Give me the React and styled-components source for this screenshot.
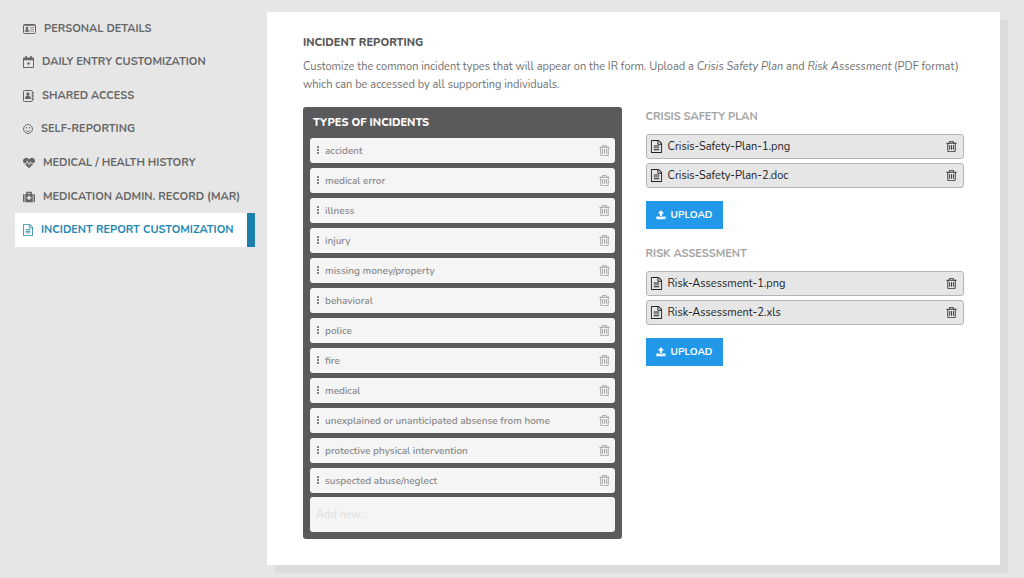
import React from "react";
import styled, { createGlobalStyle } from "styled-components";
import { FaHeartbeat, FaMedkit } from "react-icons/fa";

const GlobalStyle = createGlobalStyle`
  *, *::before, *::after { box-sizing: border-box; }
  body {
    margin: 0;
    background: #e6e6e6;
    color: #666;
    font: 400 11px/18px Nunito, "Open Sans", sans-serif;
  }
  h1, h2, p, ul { margin: 0; padding: 0; }
  ul { list-style: none; }
  button, input { font: inherit; color: inherit; }
  svg { display: block; flex: none; }
`;

const Page = styled.div`
  display: flex;
  align-items: flex-start;
  gap: 12px;
  padding: 12px 24px 14px 15px;
`;

const Nav = styled.nav`
  flex: none;
  display: grid;
  grid-auto-rows: 1fr;
  width: 240px;
  min-height: 235px;
`;

const NavLink = styled.a`
  display: flex;
  align-items: center;
  gap: 8px;
  padding-left: 8px;
  color: ${(p) => (p.$active ? "#2387b3" : "#666")};
  background: ${(p) => (p.$active ? "#fff" : "transparent")};
  border-right: 8px solid ${(p) => (p.$active ? "#1a7fab" : "transparent")};
  font-weight: 700;
  text-decoration: none;
  white-space: nowrap;
`;

const Panel = styled.main`
  flex: 1;
  min-width: 0;
  padding: 22px 36px 26px;
  background: #fff;
  box-shadow: 8px 8px 0 #dcdcdc;
`;

const Title = styled.h1`
  font-size: 11px;
  line-height: 18px;
  font-weight: 800;
  color: #58585a;
`;

const Intro = styled.p`
  margin-top: 6px;
  color: #707070;
`;

const Columns = styled.div`
  display: grid;
  grid-template-columns: 1fr 1fr;
  align-items: start;
  gap: 24px;
  margin-top: 13px;
`;

const Incidents = styled.section`
  padding: 7px;
  background: #5a5a5c;
  border-radius: 3px;
`;

const IncidentsTitle = styled.h2`
  padding: 0 3px;
  margin-bottom: 6px;
  color: #fff;
  font-size: 11px;
  line-height: 18px;
  font-weight: 800;
`;

const IncidentList = styled.ul`
  display: grid;
  gap: 5px;
`;

const Incident = styled.li`
  display: flex;
  align-items: center;
  gap: 5px;
  height: 25px;
  padding: 0 4px 0 6px;
  background: #f5f5f5;
  border-radius: 3px;
  color: #8a8a8a;
  font-size: 10px;
  font-weight: 600;
`;

const Label = styled.span`
  flex: 1;
  min-width: 0;
`;

const IconButton = styled.button`
  display: flex;
  padding: 0;
  border: 0;
  background: none;
  color: ${(p) => (p.$dark ? "#333338" : "#a0a0a0")};
  cursor: pointer;
`;

const NewIncident = styled.input`
  display: block;
  width: 100%;
  height: 35px;
  margin-top: 4px;
  padding: 0 6px;
  border: 0;
  border-radius: 3px;
  background: #f5f5f5;
  &::placeholder { color: #dedede; opacity: 1; }
`;

const Documents = styled.div`
  display: grid;
  gap: 15px;
`;

const DocTitle = styled.h2`
  color: #a3a3a3;
  font-size: 11px;
  line-height: 20px;
  font-weight: 700;
`;

const FileList = styled.ul`
  display: grid;
  gap: 4px;
  margin: 7px 0 13px;
`;

const FileRow = styled.li`
  display: flex;
  align-items: center;
  gap: 5px;
  height: 25px;
  padding: 0 5px 0 3px;
  border: 1px solid #b4b4b4;
  border-radius: 3px;
  background: #e6e6e6;
  color: #222;
`;

const Upload = styled.button`
  display: flex;
  align-items: center;
  justify-content: center;
  gap: 5px;
  width: 77px;
  height: 28px;
  padding: 0;
  border: 0;
  background: #2199e8;
  color: #fff;
  font-size: 10px;
  font-weight: 700;
  cursor: pointer;
`;

const FaGlyph = ({ d, size }) => (
  <svg width={size} height={size} viewBox="0 0 1792 1792" fill="currentColor" aria-hidden="true">
    <path d={d} />
  </svg>
);

const TRASH =
  "M704 736v576q0 14-9 23t-23 9h-64q-14 0-23-9t-9-23v-576q0-14 9-23t23-9h64q14 0 23 9t9 23zm256 0v576q0 14-9 23t-23 9h-64q-14 0-23-9t-9-23v-576q0-14 9-23t23-9h64q14 0 23 9t9 23zm256 0v576q0 14-9 23t-23 9h-64q-14 0-23-9t-9-23v-576q0-14 9-23t23-9h64q14 0 23 9t9 23zm128 724v-948h-896v948q0 22 7 40.5t14.5 27 10.5 8.5h832q3 0 10.5-8.5t14.5-27 7-40.5zm-672-1076h448l-48-117q-7-9-17-11h-317q-10 2-17 11zm928 32v64q0 14-9 23t-23 9h-96v948q0 83-47 143.5t-113 60.5h-832q-66 0-113-58.5t-47-141.5v-952h-96q-14 0-23-9t-9-23v-64q0-14 9-23t23-9h309l70-167q15-37 54-63t79-26h320q40 0 79 26t54 63l70 167h309q14 0 23 9t9 23z";
const UPLOAD =
  "M1344 1472q0-26-19-45t-45-19-45 19-19 45 19 45 45 19 45-19 19-45zm256 0q0-26-19-45t-45-19-45 19-19 45 19 45 45 19 45-19 19-45zm128-224v320q0 40-28 68t-68 28h-1472q-40 0-68-28t-28-68v-320q0-40 28-68t68-28h427q21 56 70.5 92t110.5 36h256q61 0 110.5-36t70.5-92h427q40 0 68 28t28 68zm-325-648q-17 40-59 40h-256v448q0 26-19 45t-45 19h-256q-26 0-45-19t-19-45v-448h-256q-42 0-59-40-17-39 14-69l448-448q18-19 45-19t45 19l448 448q31 30 14 69z";
const FILE =
  "M1596 380q28 28 48 76t20 88v1152q0 40-28 68t-68 28h-1344q-40 0-68-28t-28-68v-1600q0-40 28-68t68-28h896q40 0 88 20t76 48zm-444-244v376h376q-10-29-22-41l-313-313q-12-12-41-22zm384 1528v-1024h-416q-40 0-68-28t-28-68v-416h-768v1536h1280zm-1024-864q0-14 9-23t23-9h704q14 0 23 9t9 23v64q0 14-9 23t-23 9h-704q-14 0-23-9t-9-23v-64zm736 224q14 0 23 9t9 23v64q0 14-9 23t-23 9h-704q-14 0-23-9t-9-23v-64q0-14 9-23t23-9h704zm0 256q14 0 23 9t9 23v64q0 14-9 23t-23 9h-704q-14 0-23-9t-9-23v-64q0-14 9-23t23-9h704z";

const IdCardIcon = () => (
  <svg width="13" height="10" viewBox="0 0 13 10" aria-hidden="true">
    <rect x=".5" y=".5" width="12" height="9" rx="1" fill="none" stroke="currentColor" />
    <path d="M.5 1.3h12" stroke="currentColor" />
    <circle cx="4" cy="4" r="1.3" fill="currentColor" />
    <path d="M2 7.6q0-2.2 2-2.2t2 2.2zM7.2 3.6H11M7.2 5.4H11M7.2 7.2H11" fill="currentColor" stroke="currentColor" strokeWidth=".6" />
  </svg>
);

const CalendarIcon = () => (
  <svg width="11" height="12" viewBox="0 0 11 12" aria-hidden="true">
    <path d="M1 1.5h1.2V.6q0-.6.6-.6h.6q.6 0 .6.6v.9h3V.6q0-.6.6-.6h.6q.6 0 .6.6v.9H10q1 0 1 1V11q0 1-1 1H1q-1 0-1-1V2.500q0-1 1-1zM1 4.300V11h9V4.300z" fill="currentColor" fillRule="evenodd" />
    <path d="M5.500 6v3.200M3.900 7.600h3.200" stroke="currentColor" strokeWidth=".9" />
  </svg>
);

const AddressBookIcon = () => (
  <svg width="11" height="12" viewBox="0 0 11 12" aria-hidden="true">
    <rect x=".5" y=".5" width="8.800" height="11" rx=".8" fill="none" stroke="currentColor" />
    <circle cx="4.900" cy="4" r="1.700" fill="currentColor" />
    <path d="M2 8.900q-.2-3.500 2.900-3.500t2.900 3.500z" fill="currentColor" />
    <path d="M10.300 2v1.800M10.300 5.100v1.800M10.300 8.200V10" stroke="currentColor" />
  </svg>
);

const SmileIcon = () => (
  <svg width="10" height="10" viewBox="0 0 10 10" aria-hidden="true">
    <circle cx="5" cy="5" r="4.500" fill="none" stroke="currentColor" strokeWidth=".9" />
    <circle cx="3.400" cy="3.700" r=".75" fill="currentColor" />
    <circle cx="6.600" cy="3.700" r=".75" fill="currentColor" />
    <path d="M2.700 6q.6 1.700 2.300 1.700T7.300 6" fill="none" stroke="currentColor" strokeWidth=".8" />
  </svg>
);

const NavFileIcon = () => (
  <svg width="10" height="12" viewBox="128 0 1536 1792" fill="currentColor" aria-hidden="true">
    <path d={FILE} />
  </svg>
);

const GripIcon = () => (
  <svg width="4" height="9" viewBox="0 0 4 9" fill="#808080" aria-hidden="true">
    <rect x="1" y="0" width="2" height="2" />
    <rect x="1" y="3" width="2" height="2" />
    <rect x="1" y="6" width="2" height="2" />
  </svg>
);

const sections = [
  { label: "PERSONAL DETAILS", icon: <IdCardIcon /> },
  { label: "DAILY ENTRY CUSTOMIZATION", icon: <CalendarIcon /> },
  { label: "SHARED ACCESS", icon: <AddressBookIcon /> },
  { label: "SELF-REPORTING", icon: <SmileIcon /> },
  { label: "MEDICAL / HEALTH HISTORY", icon: <FaHeartbeat size={12} /> },
  { label: "MEDICATION ADMIN. RECORD (MAR)", icon: <FaMedkit size={12} /> },
  { label: "INCIDENT REPORT CUSTOMIZATION", icon: <NavFileIcon />, active: true },
];

const incidents = [
  "accident",
  "medical error",
  "illness",
  "injury",
  "missing money/property",
  "behavioral",
  "police",
  "fire",
  "medical",
  "unexplained or unanticipated absense from home",
  "protective physical intervention",
  "suspected abuse/neglect",
];

const documents = [
  { title: "CRISIS SAFETY PLAN", files: ["Crisis-Safety-Plan-1.png", "Crisis-Safety-Plan-2.doc"] },
  { title: "RISK ASSESSMENT", files: ["Risk-Assessment-1.png", "Risk-Assessment-2.xls"] },
];

const DocumentGroup = ({ title, files }) => (
  <section>
    <DocTitle>{title}</DocTitle>
    <FileList>
      {files.map((name) => (
        <FileRow key={name}>
          <FaGlyph d={FILE} size={13} />
          <Label>{name}</Label>
          <IconButton $dark type="button" aria-label={`Delete ${name}`}>
            <FaGlyph d={TRASH} size={13} />
          </IconButton>
        </FileRow>
      ))}
    </FileList>
    <Upload type="button">
      <FaGlyph d={UPLOAD} size={10} />
      UPLOAD
    </Upload>
  </section>
);

export default function App() {
  return (
    <>
      <GlobalStyle />
      <Page>
        <Nav aria-label="Settings">
          {sections.map(({ label, icon, active }) => (
            <NavLink key={label} href="#" $active={active} aria-current={active ? "page" : undefined}>
              {icon}
              {label}
            </NavLink>
          ))}
        </Nav>
        <Panel>
          <Title>INCIDENT REPORTING</Title>
          <Intro>
            Customize the common incident types that will appear on the IR form. Upload a <em>Crisis Safety Plan</em> and{" "}
            <em>Risk Assessment</em> (PDF format) which can be accessed by all supporting individuals.
          </Intro>
          <Columns>
            <Incidents>
              <IncidentsTitle>TYPES OF INCIDENTS</IncidentsTitle>
              <IncidentList>
                {incidents.map((name) => (
                  <Incident key={name}>
                    <GripIcon />
                    <Label>{name}</Label>
                    <IconButton type="button" aria-label={`Delete ${name}`}>
                      <FaGlyph d={TRASH} size={13} />
                    </IconButton>
                  </Incident>
                ))}
              </IncidentList>
              <NewIncident type="text" placeholder="Add new..." aria-label="Add new incident type" />
            </Incidents>
            <Documents>
              {documents.map((group) => (
                <DocumentGroup key={group.title} {...group} />
              ))}
            </Documents>
          </Columns>
        </Panel>
      </Page>
    </>
  );
}
